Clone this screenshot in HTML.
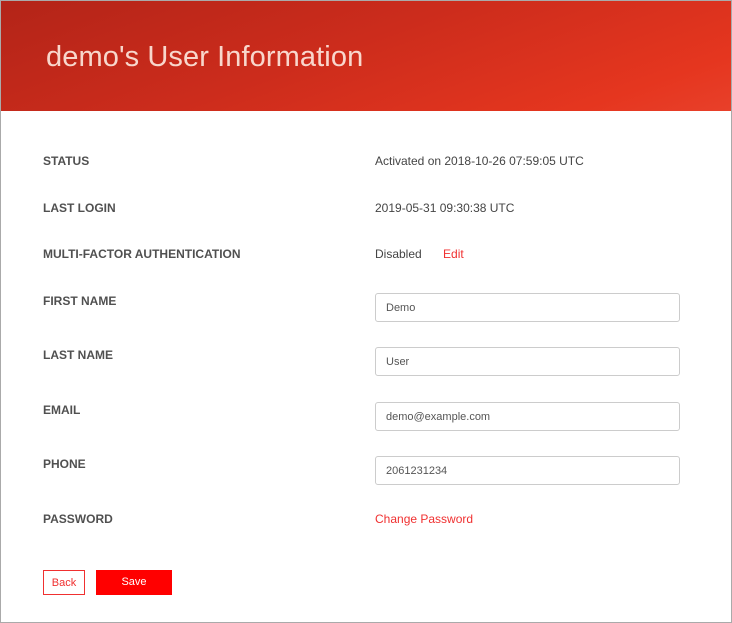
<!DOCTYPE html>
<html><head><style>
body{margin:0;width:732px;height:623px;overflow:hidden;background:#fff;font-family:"Liberation Sans",sans-serif;}
.frame{position:absolute;left:0;top:0;width:730px;height:621px;border:1px solid #aaa;}
.hdr{position:absolute;left:1px;top:1px;width:730px;height:110px;background:linear-gradient(160deg,#b32418 0%,#cc2c1c 45%,#e5361f 85%,#e8402a 100%);}
.hdr h1{position:absolute;left:45px;top:40px;margin:0;font-weight:normal;font-size:29px;color:#fde6dc;letter-spacing:0.1px;opacity:0.92;}
.lbl{position:absolute;left:43px;font-size:12px;font-weight:bold;color:#505050;}
.val{position:absolute;left:375px;font-size:12px;color:#444;}
.red{color:#f03030;}
.inp{position:absolute;left:375px;width:303px;height:27px;border:1px solid #ccc;border-radius:3px;font-size:11px;color:#555;line-height:28px;box-sizing:content-box;}
.inp span{padding-left:10px;}
.btn{position:absolute;top:570px;height:23px;font-size:11px;line-height:24px;text-align:center;}
</style></head><body>
<div class="frame"></div>
<div class="hdr"><h1>demo's User Information</h1></div>
<div class="lbl" style="top:154px">STATUS</div>
<div class="val" style="top:154px">Activated on 2018-10-26 07:59:05 UTC</div>
<div class="lbl" style="top:201px">LAST LOGIN</div>
<div class="val" style="top:201px">2019-05-31 09:30:38 UTC</div>
<div class="lbl" style="top:247px">MULTI-FACTOR AUTHENTICATION</div>
<div class="val" style="top:247px">Disabled <span class="red" style="margin-left:18px">Edit</span></div>
<div class="lbl" style="top:294px">FIRST NAME</div>
<div class="inp" style="top:293px"><span>Demo</span></div>
<div class="lbl" style="top:348px">LAST NAME</div>
<div class="inp" style="top:347px"><span>User</span></div>
<div class="lbl" style="top:403px">EMAIL</div>
<div class="inp" style="top:402px"><span>demo@example.com</span></div>
<div class="lbl" style="top:457px">PHONE</div>
<div class="inp" style="top:456px"><span>2061231234</span></div>
<div class="lbl" style="top:512px">PASSWORD</div>
<div class="val red" style="top:512px">Change Password</div>
<div class="btn" style="left:43px;width:40px;border:1px solid #f03030;color:#f03030;">Back</div>
<div class="btn" style="left:96px;width:76px;height:25px;line-height:25px;background:#ff0000;color:#fff;">Save</div>
</body></html>
